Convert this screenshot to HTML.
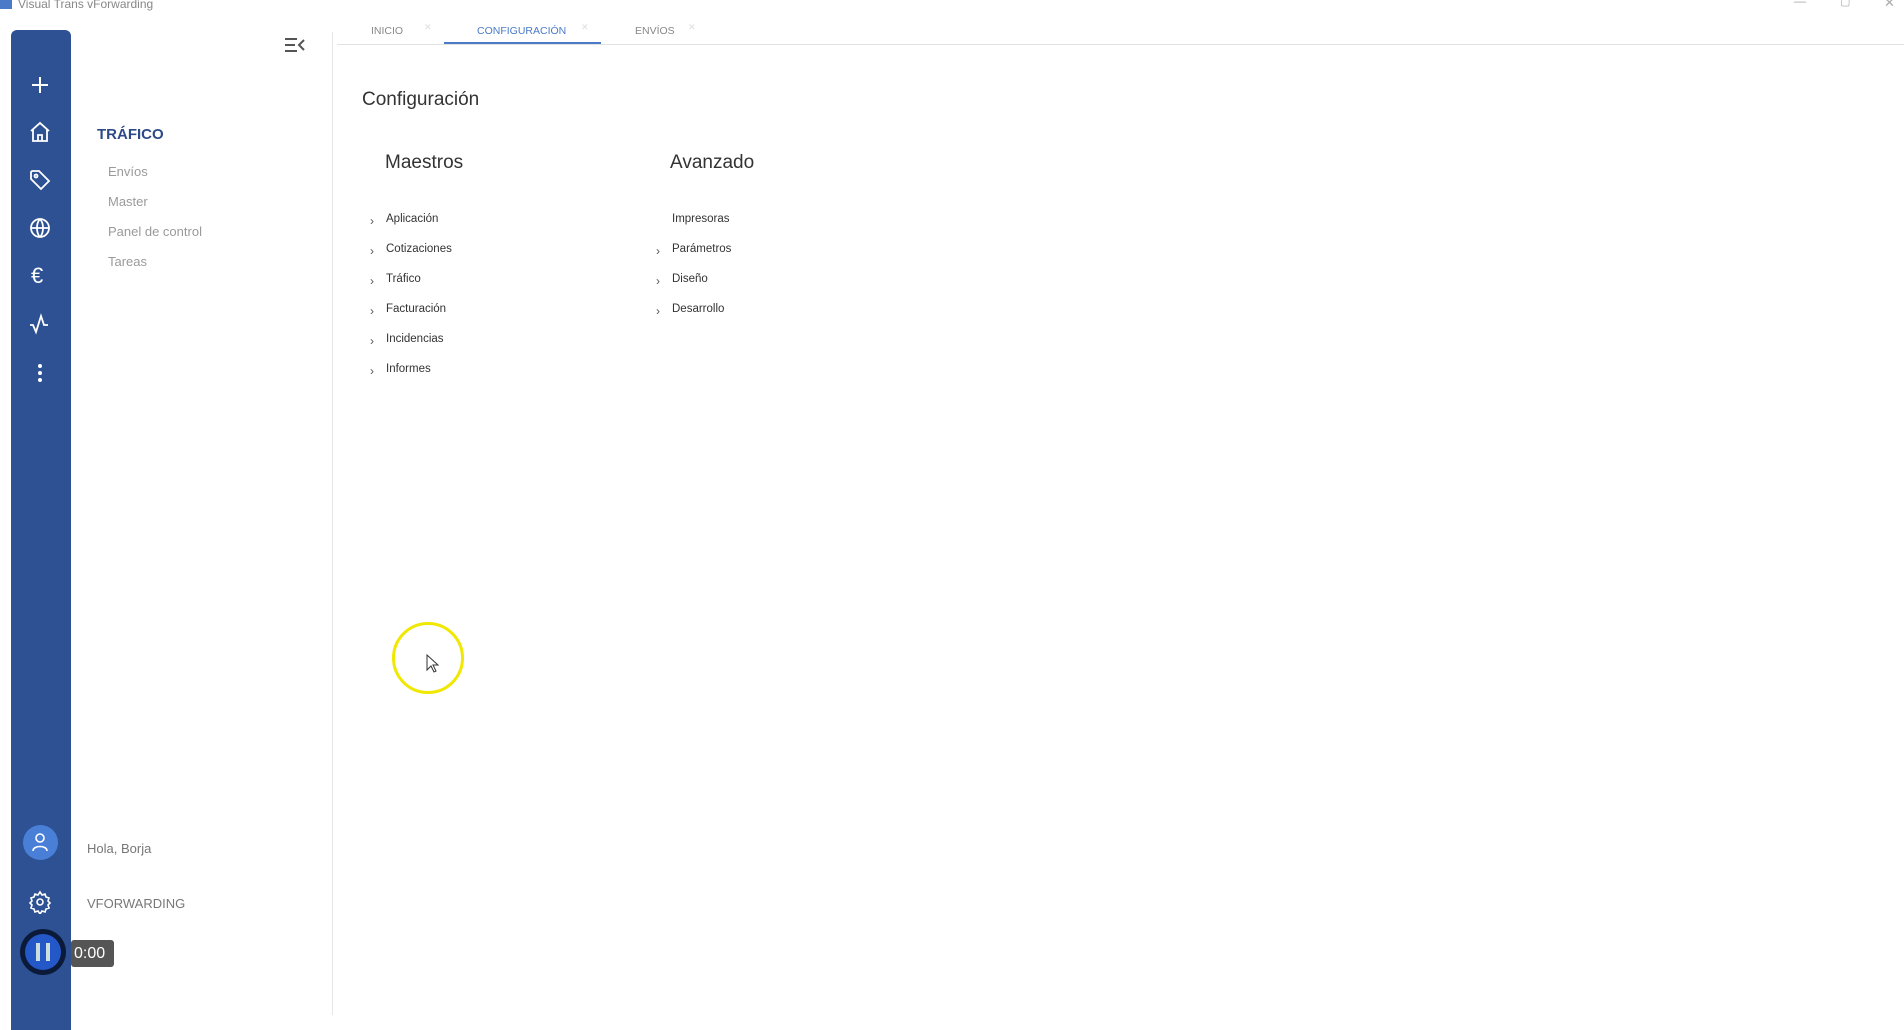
<!DOCTYPE html>
<html><head><meta charset="utf-8"><style>
*{margin:0;padding:0;box-sizing:border-box}
body{width:1904px;height:1030px;background:#fff;font-family:"Liberation Sans",sans-serif;position:relative;overflow:hidden}
.a{position:absolute;white-space:nowrap}
.side{position:absolute;left:11px;top:30px;width:60px;height:1000px;background:#2d5192;border-radius:6px 6px 0 0}
.ic{position:absolute;left:28px;width:24px;height:24px}
.tab{font-size:10.5px;color:#888;top:25px}
.x{font-size:9px;color:#ddd;top:22px}
.nav{font-size:13px;color:#9a9a9a;left:108px}
.it{font-size:11.5px;color:#333}
.ch{font-size:12px;color:#555}
</style></head><body>
<div class="a" style="left:0;top:0;width:12px;height:9px;background:#4a7ac8"></div>
<div class="a" style="left:18px;top:-3px;font-size:12px;color:#888">Visual Trans vForwarding</div>
<div class="a" style="left:1794px;top:-6px;font-size:12px;color:#aaa">—</div>
<div class="a" style="left:1840px;top:-5px;font-size:11px;color:#aaa">▢</div>
<div class="a" style="left:1884px;top:-5px;font-size:13px;color:#aaa">✕</div>

<div class="side"></div>
<svg class="ic" style="top:73px" viewBox="0 0 24 24" fill="none" stroke="#fff" stroke-width="2"><path d="M12 4v16M4 12h16"/></svg>
<svg class="ic" style="top:120px" viewBox="0 0 24 24" fill="none" stroke="#fff" stroke-width="1.8"><path d="M3 11L12 3l9 8M5 9v12h14V9M10 21v-6h4v6"/></svg>
<svg class="ic" style="top:168px" viewBox="0 0 24 24" fill="none" stroke="#fff" stroke-width="1.8"><path d="M3 4v7l10 10 8-8L11 3H4z"/><circle cx="8" cy="8" r="1.5"/></svg>
<svg class="ic" style="top:216px" viewBox="0 0 24 24" fill="none" stroke="#fff" stroke-width="1.8"><circle cx="12" cy="12" r="9"/><path d="M3 12h18M12 3c-4 4-4 14 0 18M12 3c4 4 4 14 0 18"/></svg>
<div class="a" style="left:31px;top:263px;font-size:22px;color:#fff">€</div>
<svg class="ic" style="top:312px" viewBox="0 0 24 24" fill="none" stroke="#fff" stroke-width="1.8"><path d="M2 13h3l3 7 5-16 3 9h4"/></svg>
<svg class="ic" style="top:361px" viewBox="0 0 24 24" fill="#fff"><circle cx="12" cy="5" r="2"/><circle cx="12" cy="12" r="2"/><circle cx="12" cy="19" r="2"/></svg>
<div class="a" style="left:23px;top:825px;width:35px;height:35px;border-radius:50%;background:#4a7fd8"></div>
<svg class="ic" style="top:830px" viewBox="0 0 24 24" fill="none" stroke="#fff" stroke-width="1.6"><circle cx="12" cy="8" r="4"/><path d="M5 21c0-6 14-6 14 0"/></svg>
<svg class="ic" style="top:890px" viewBox="0 0 24 24" fill="none" stroke="#fff" stroke-width="1.6"><circle cx="12" cy="12" r="3"/><path d="M12 2l2 3 3-1 1 3 3 1-1 3 2 2-2 2 1 3-3 1-1 3-3-1-2 3-2-3-3 1-1-3-3-1 1-3-2-2 2-2-1-3 3-1 1-3 3 1z"/></svg>
<div class="a" style="left:20px;top:929px;width:46px;height:46px;border-radius:50%;background:#0c1a3a"></div>
<div class="a" style="left:25px;top:934px;width:36px;height:36px;border-radius:50%;background:#2458c8"></div>
<div class="a" style="left:36px;top:943px;width:14px;height:18px;border-left:4px solid #cdd;border-right:4px solid #cdd"></div>
<div class="a" style="left:71px;top:940px;width:43px;height:27px;background:#555;border-radius:3px;color:#fff;font-size:16px;line-height:27px;padding-left:3px">0:00</div>

<svg class="a" style="left:284px;top:36px" width="22" height="18" viewBox="0 0 22 18" fill="none" stroke="#555" stroke-width="2"><path d="M1 3h12M1 9h10M1 15h12M20 4l-5 5 5 5"/></svg>
<div class="a" style="left:97px;top:126px;font-size:15px;font-weight:bold;color:#2d4a88">TRÁFICO</div>
<div class="a nav" style="top:164px">Envíos</div>
<div class="a nav" style="top:194px">Master</div>
<div class="a nav" style="top:224px">Panel de control</div>
<div class="a nav" style="top:254px">Tareas</div>
<div class="a" style="left:87px;top:841px;font-size:13px;color:#777">Hola, Borja</div>
<div class="a" style="left:87px;top:896px;font-size:13px;color:#777">VFORWARDING</div>
<div class="a" style="left:332px;top:32px;width:1px;height:983px;background:#e6e6e6"></div>

<div class="a" style="left:337px;top:44px;width:1567px;height:1px;background:#e2e2e2"></div>
<div class="a tab" style="left:371px">INICIO</div><div class="a x" style="left:424px">✕</div>
<div class="a tab" style="left:477px;color:#4a7ac8">CONFIGURACIÓN</div><div class="a x" style="left:581px">✕</div>
<div class="a tab" style="left:635px">ENVÍOS</div><div class="a x" style="left:688px">✕</div>
<div class="a" style="left:444px;top:42px;width:157px;height:2px;background:#4a7ac8"></div>

<div class="a" style="left:362px;top:89px;font-size:19px;color:#333">Configuración</div>
<div class="a" style="left:385px;top:152px;font-size:19px;color:#333">Maestros</div>
<div class="a" style="left:670px;top:152px;font-size:19px;color:#333">Avanzado</div>

<div class="a ch" style="left:370px;top:214px">›</div><div class="a it" style="left:386px;top:213px">Aplicación</div>
<div class="a ch" style="left:370px;top:244px">›</div><div class="a it" style="left:386px;top:243px">Cotizaciones</div>
<div class="a ch" style="left:370px;top:274px">›</div><div class="a it" style="left:386px;top:273px">Tráfico</div>
<div class="a ch" style="left:370px;top:304px">›</div><div class="a it" style="left:386px;top:303px">Facturación</div>
<div class="a ch" style="left:370px;top:334px">›</div><div class="a it" style="left:386px;top:333px">Incidencias</div>
<div class="a ch" style="left:370px;top:364px">›</div><div class="a it" style="left:386px;top:363px">Informes</div>

<div class="a it" style="left:672px;top:213px">Impresoras</div>
<div class="a ch" style="left:656px;top:244px">›</div><div class="a it" style="left:672px;top:243px">Parámetros</div>
<div class="a ch" style="left:656px;top:274px">›</div><div class="a it" style="left:672px;top:273px">Diseño</div>
<div class="a ch" style="left:656px;top:304px">›</div><div class="a it" style="left:672px;top:303px">Desarrollo</div>

<div class="a" style="left:392px;top:622px;width:72px;height:72px;border-radius:50%;border:3px solid #f0e800"></div>
<svg class="a" style="left:426px;top:654px" width="14" height="20" viewBox="0 0 14 20"><path d="M1 1v15l4-4 3 6 2-1-3-6h5z" fill="#fff" stroke="#333" stroke-width="1"/></svg>
</body></html>
